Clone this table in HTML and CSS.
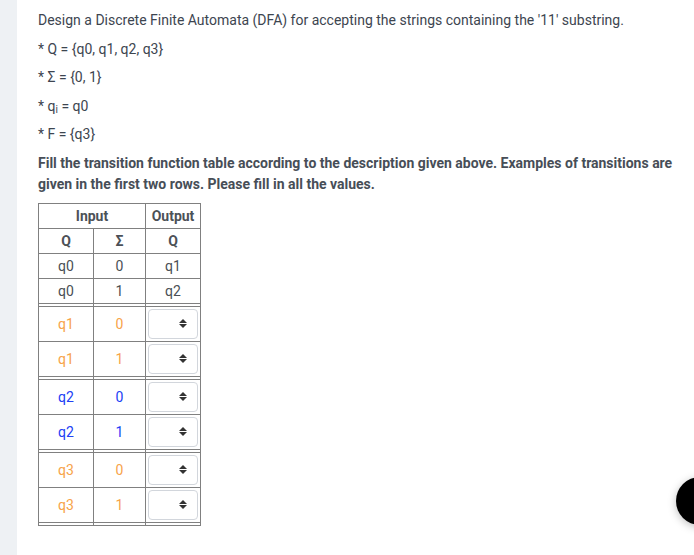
FILE: index.html
```html
<!DOCTYPE html>
<html>
<head>
<meta charset="utf-8">
<link rel="stylesheet" href="styles.css">
</head>
<body>
<div class="page">
  <aside class="side"></aside>
  <main class="content">
    <p>Design a Discrete Finite Automata (DFA) for accepting the strings containing the '11' substring.</p>
    <p>* Q = {q0, q1, q2, q3}</p>
    <p>* Σ = {0, 1}</p>
    <p>* q<sub>i</sub> = q0</p>
    <p>* F = {q3}</p>
    <p class="bold">Fill the transition function table according to the description given above. Examples of transitions are given in the first two rows. Please fill in all the values.</p>
    <table class="dfa">
      <tr class="head"><th colspan="2">Input</th><th>Output</th></tr>
      <tr class="head"><th>Q</th><th>Σ</th><th>Q</th></tr>
      <tr class="ex"><td>q0</td><td>0</td><td>q1</td></tr>
      <tr class="ex"><td>q0</td><td>1</td><td>q2</td></tr>
      <tr class="gap"><td></td><td></td><td></td></tr>
      <tr class="row orange"><td>q1</td><td>0</td><td><div class="sel"><span class="arr"></span></div></td></tr>
      <tr class="row orange"><td>q1</td><td>1</td><td><div class="sel"><span class="arr"></span></div></td></tr>
      <tr class="gap"><td></td><td></td><td></td></tr>
      <tr class="row blue"><td>q2</td><td>0</td><td><div class="sel"><span class="arr"></span></div></td></tr>
      <tr class="row blue"><td>q2</td><td>1</td><td><div class="sel"><span class="arr"></span></div></td></tr>
      <tr class="gap"><td></td><td></td><td></td></tr>
      <tr class="row orange"><td>q3</td><td>0</td><td><div class="sel"><span class="arr"></span></div></td></tr>
      <tr class="row orange"><td>q3</td><td>1</td><td><div class="sel"><span class="arr"></span></div></td></tr>
      <tr class="gap"><td></td><td></td><td></td></tr>
    </table>
  </main>
</div>
<div class="fab"></div>
</body>
</html>
```
FILE: styles.css
```css
html, body {
  margin: 0;
  padding: 0;
  background: #ffffff;
}
body {
  font-family: Roboto, "Liberation Sans", sans-serif;
  font-size: 14px;
  color: #3d4550;
}
.page {
  display: flex;
  min-height: 555px;
}
.side {
  width: 17px;
  flex: none;
  background: #eef1f4;
}
.content {
  flex: 1;
  padding: 10px 0 0 21px;
}
p {
  margin: 0 0 7.5px;
  line-height: 21px;
}
sub {
  font-size: 10px;
  vertical-align: -2px;
  line-height: 0;
}
.bold {
  font-weight: bold;
  line-height: 21.5px;
  color: #474e57;
}
.dfa {
  border-collapse: collapse;
  table-layout: fixed;
  margin-top: 6px;
  font-size: 14px;
  color: #4a4f55;
}
.dfa th, .dfa td {
  border: 1px solid #808080;
  text-align: center;
  padding: 0 2px;
}
.dfa th {
  font-weight: bold;
  color: #4c5157;
  height: 24px;
}
.dfa td:nth-child(1) { width: 50px; }
.dfa td:nth-child(2) { width: 47px; }
.dfa td:nth-child(3) { width: 50px; }
.dfa tr.ex td {
  height: 24px;
}
.dfa tr.gap td {
  height: 2px;
  padding: 0;
  font-size: 0;
  line-height: 0;
}
.dfa tr.row td {
  height: 34px;
}
.orange td { color: #f7a34a; }
.blue td { color: #2140f5; }
.sel {
  height: 28px;
  border: 1px solid #d2d6dc;
  border-radius: 4px;
  background: #fff;
  position: relative;
}
.arr {
  position: absolute;
  right: 10px;
  top: 9px;
  width: 0;
  height: 0;
  border-left: 4px solid transparent;
  border-right: 4px solid transparent;
  border-bottom: 4px solid #333;
}
.arr::after {
  content: "";
  position: absolute;
  left: -4px;
  top: 5px;
  border-left: 4px solid transparent;
  border-right: 4px solid transparent;
  border-top: 4px solid #333;
}
.fab {
  position: fixed;
  right: -30px;
  bottom: 30px;
  width: 48px;
  height: 48px;
  border-radius: 50%;
  background: #000;
  box-shadow: 0 2px 8px rgba(0,0,0,0.25);
}
```
